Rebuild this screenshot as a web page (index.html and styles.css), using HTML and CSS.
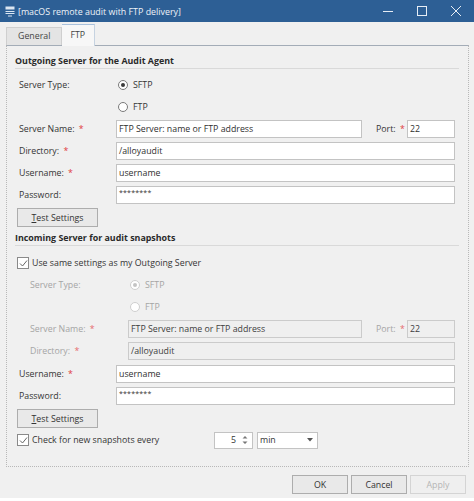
FILE: index.html
```html
<!DOCTYPE html>
<html lang="en">
  <head>
    <meta charset="UTF-8" />
    <title>macOS remote audit with FTP delivery</title>
    <link rel="stylesheet" href="styles.css">
  </head>
  <body>
    <div class="window">
      <div class="titlebar">
        <svg class="app-icon" width="10" height="11" viewBox="0 0 10 11">
          <rect x="0.5" y="0.5" width="9" height="3" fill="#dbe6f2" />
          <rect x="0.5" y="5" width="9" height="1" fill="#dbe6f2" />
          <rect x="0.5" y="7" width="9" height="1" fill="#dbe6f2" />
          <rect x="3" y="9.5" width="4" height="1" fill="#dbe6f2" />
        </svg>
        <div class="title">[macOS remote audit with FTP delivery]</div>
        <div class="caption-btns">
          <svg width="10" height="10" viewBox="0 0 10 10"><line x1="0" y1="5.5" x2="10" y2="5.5" stroke="#e6edf5" /></svg>
          <svg width="10" height="10" viewBox="0 0 10 10"><rect x="0.5" y="0.5" width="9" height="9" fill="none" stroke="#e6edf5" /></svg>
          <svg width="10" height="10" viewBox="0 0 10 10"><path d="M0 0 L10 10 M10 0 L0 10" stroke="#e6edf5" /></svg>
        </div>
      </div>

      <div class="content">
        <div class="tabs">
          <div class="tab">General</div>
          <div class="tab active">FTP</div>
        </div>

        <div class="pane">
          <div class="section-head">Outgoing Server for the Audit Agent</div>
          <div class="group">
            <div class="row">
              <div class="label">Server Type:</div>
              <span class="radio checked"></span><span>SFTP</span>
            </div>
            <div class="row">
              <div class="label"></div>
              <span class="radio"></span><span>FTP</span>
            </div>
            <div class="row">
              <div class="label">Server Name: <span class="req">*</span></div>
              <div class="input grow">FTP Server: name or FTP address</div>
              <div class="port-label">Port: <span class="req">*</span></div>
              <div class="input port">22</div>
            </div>
            <div class="row">
              <div class="label">Directory: <span class="req">*</span></div>
              <div class="input grow">/alloyaudit</div>
            </div>
            <div class="row">
              <div class="label">Username: <span class="req">*</span></div>
              <div class="input grow">username</div>
            </div>
            <div class="row">
              <div class="label">Password:</div>
              <div class="input grow"><span class="stars">********</span></div>
            </div>
          </div>
          <button class="btn test-btn"><u>T</u>est Settings</button>

          <div class="section-head second">Incoming Server for audit snapshots</div>
          <div class="row check-row">
            <span class="checkbox">
              <svg width="9" height="9" viewBox="0 0 9 9"><path d="M1 4.5 L3.5 7 L8 1.5" fill="none" stroke="#666" stroke-width="1" /></svg>
            </span>
            <span>Use same settings as my Outgoing Server</span>
          </div>
          <div class="group disabled">
            <div class="row">
              <div class="label">Server Type:</div>
              <span class="radio checked"></span><span>SFTP</span>
            </div>
            <div class="row">
              <div class="label"></div>
              <span class="radio"></span><span>FTP</span>
            </div>
            <div class="row">
              <div class="label">Server Name: <span class="req">*</span></div>
              <div class="input grow">FTP Server: name or FTP address</div>
              <div class="port-label">Port: <span class="req">*</span></div>
              <div class="input port">22</div>
            </div>
            <div class="row">
              <div class="label">Directory: <span class="req">*</span></div>
              <div class="input grow">/alloyaudit</div>
            </div>
          </div>
          <div class="group after-disabled">
            <div class="row">
              <div class="label">Username: <span class="req">*</span></div>
              <div class="input grow">username</div>
            </div>
            <div class="row">
              <div class="label">Password:</div>
              <div class="input grow"><span class="stars">********</span></div>
            </div>
          </div>
          <button class="btn test-btn"><u>T</u>est Settings</button>

          <div class="row check-row last">
            <span class="checkbox">
              <svg width="9" height="9" viewBox="0 0 9 9"><path d="M1 4.5 L3.5 7 L8 1.5" fill="none" stroke="#666" stroke-width="1" /></svg>
            </span>
            <span class="check-text">Check for new snapshots every</span>
            <div class="spin">
              <span>5</span>
              <svg width="6" height="10" viewBox="0 0 6 10"><path d="M0.5 3.5 L3 1 L5.5 3.5 Z M0.5 6.5 L3 9 L5.5 6.5 Z" fill="#777" /></svg>
            </div>
            <div class="combo">
              <span>min</span>
              <svg width="6" height="4" viewBox="0 0 6 4"><path d="M0 0 L6 0 L3 3.5 Z" fill="#555" /></svg>
            </div>
          </div>
        </div>
      </div>

      <div class="footer">
        <button class="btn">OK</button>
        <button class="btn">Cancel</button>
        <button class="btn" disabled>Apply</button>
      </div>
    </div>
  </body>
</html>
```

FILE: styles.css
```css
body {
  margin: 0;
  font-family: "Open Sans", "Noto Sans", sans-serif;
  font-size: 8.8px;
  color: #353535;
  background: #fff;
}

.window {
  width: 474px;
  height: 498px;
  background: #f0f0f0;
  display: flex;
  flex-direction: column;
}

/* ========== Title bar ========== */
.titlebar {
  height: 22px;
  background: #2d5f95;
  color: #eef3f8;
  display: flex;
  align-items: center;
  padding-left: 5px;
}

.app-icon {
  margin-right: 3px;
}

.title {
  flex: 1;
  font-size: 8.9px;
}

.caption-btns {
  display: flex;
  gap: 24px;
  padding-right: 13px;
}

/* ========== Tabs ========== */
.content {
  padding: 0 5px 0 6px;
}

.tabs {
  height: 23px;
  display: flex;
  align-items: flex-end;
}

.tab {
  height: 17px;
  line-height: 17px;
  padding: 0 11px 0 11px;
  background: #e4e4e4;
  border: 1px solid #cfcfcf;
  border-bottom: none;
  color: #444;
}

.tab.active {
  height: 21px;
  line-height: 21px;
  padding: 0 9px 0 8px;
  background: #f7f7f7;
  border-color: #c6d3e1;
  border-top: 1px solid #a9c1dc;
  border-left: none;
  margin-bottom: -1px;
  position: relative;
  z-index: 1;
}

.pane {
  height: 420px;
  border-top: 1px solid #a3acb7;
  border-left: 1px dotted #b8b8b8;
  border-right: 1px dotted #b8b8b8;
  border-bottom: 1px dotted #b8b8b8;
  padding: 0 9px 0 8px;
}

.section-head {
  margin-top: 8px;
  line-height: 14px;
  font-size: 8.9px;
  font-weight: bold;
  color: #2a2a2a;
  border-bottom: 1px solid #d9d9d9;
}

.section-head.second {
  margin-top: 4px;
}

/* ========== Rows ========== */
.group {
  margin-top: 5px;
  padding: 0 4px;
}

.group.disabled {
  margin-top: 0;
  padding-left: 15px;
  color: #a5a5a5;
}

.group.after-disabled {
  margin-top: 1px;
}

.row {
  height: 22px;
  display: flex;
  align-items: center;
  white-space: nowrap;
}

.label {
  width: 97px;
  flex-shrink: 0;
}

.disabled .label {
  width: 98px;
}

.req {
  color: #e0393e;
  margin-left: 2px;
}

.disabled .req {
  color: #e66a6e;
}

.input {
  height: 16px;
  line-height: 16px;
  background: #fff;
  border: 1px solid #c3c3c3;
  padding: 0 2px;
  color: #303030;
  white-space: nowrap;
  overflow: hidden;
}

.disabled .input {
  background: #efefef;
  border-color: #cbcbcb;
  color: #404040;
}

.grow {
  flex: 1;
}

.port-label {
  width: 31px;
  margin-left: 14px;
  flex-shrink: 0;
}

.input.port {
  width: 42px;
  flex: none;
}

.stars {
  font-size: 7px;
  letter-spacing: 0.2px;
  vertical-align: top;
  position: relative;
  top: -2px;
}

.radio {
  width: 8px;
  height: 8px;
  border: 1px solid #7a7a7a;
  border-radius: 50%;
  background: #fff;
  margin: 0 5px 0 2px;
  box-sizing: content-box;
  display: inline-flex;
  align-items: center;
  justify-content: center;
}

.radio.checked::after {
  content: "";
  width: 4px;
  height: 4px;
  border-radius: 50%;
  background: #3a3a3a;
}

.disabled .radio {
  border-color: #cfcfcf;
}

.disabled .radio.checked::after {
  background: #c4c4c4;
}

.checkbox {
  width: 10px;
  height: 10px;
  border: 1px solid #8a8a8a;
  background: #fff;
  margin-right: 3px;
  display: inline-flex;
  align-items: center;
  justify-content: center;
}

.check-row {
  margin-top: 6px;
  padding-left: 2px;
}

.check-row.last {
  margin-top: 1px;
}

.check-text {
  width: 182px;
}

/* ========== Buttons ========== */
.btn {
  font-family: inherit;
  font-size: 8.8px;
  color: #333;
  background: #e9e9e9;
  border: 1px solid #adadad;
  padding: 0;
  height: 19px;
}

.btn:disabled {
  color: #b5b5b5;
  border-color: #d4d4d4;
  background: #efefef;
}

.test-btn {
  width: 81px;
  margin: 2px 0 0 2px;
  display: block;
}

.spin {
  width: 33px;
  height: 15px;
  border: 1px solid #c3c3c3;
  background: #fff;
  display: flex;
  align-items: center;
  justify-content: flex-end;
  gap: 6px;
  padding-right: 4px;
}

.combo {
  width: 53px;
  height: 15px;
  margin-left: 4px;
  border: 1px solid #c3c3c3;
  background: #fff;
  display: flex;
  align-items: center;
  justify-content: space-between;
  padding: 0 4px 0 2px;
}

/* ========== Footer ========== */
.footer {
  flex: 1;
  display: flex;
  justify-content: flex-end;
  gap: 3px;
  padding: 8px 8px 0 0;
}

.footer .btn {
  width: 56px;
  height: 19px;
}
```
